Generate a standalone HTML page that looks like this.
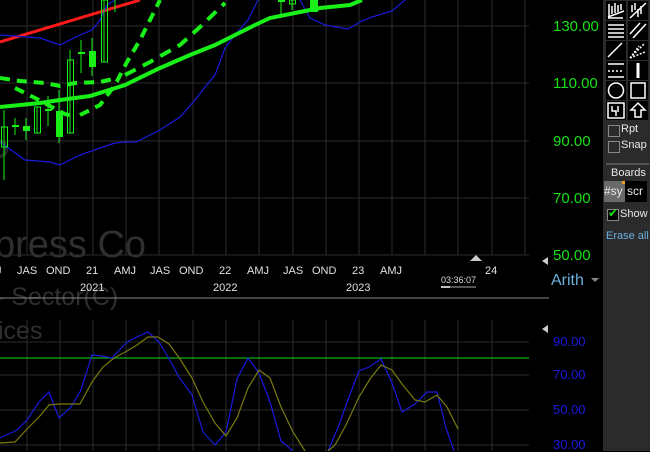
<!DOCTYPE html>
<html><head><style>
body{margin:0;width:650px;height:451px;background:#000;overflow:hidden;position:relative;font-family:"Liberation Sans",sans-serif}
.t{position:absolute;white-space:nowrap}
.wm{color:#2f2f2f;position:absolute;white-space:nowrap}
.ax{color:#e0e0e0;font-size:11px;position:absolute}
.pl{color:#18e018;font-size:15px;position:absolute;left:553px}
.bl{color:#1a1adc;font-size:13px;position:absolute;left:553px}
#side{position:absolute;left:603px;top:0;width:47px;height:451px;background:#2b2b2b}
.sl{color:#e8e8e8;font-size:11px;position:absolute}
.cb{position:absolute;width:10px;height:10px;border:1px solid #888;background:#2b2b2b}
</style></head><body>
<div class="wm" style="left:-6px;top:224px;font-size:38px">press Co</div>
<div class="wm" style="left:-4px;top:283px;font-size:25px">- Sector(C)</div>
<div class="wm" style="left:-2px;top:317px;font-size:25px">ices</div>
<div class="wm" style="left:-20px;top:128px;font-size:46px;color:#262626">P</div>
<svg width="650" height="451" style="position:absolute;left:0;top:0">
<g stroke="#2c2c2c" stroke-width="1">
<path d="M27 0V255M60 0V255M93 0V255M126 0V255M159 0V255M193 0V255M226 0V255M259 0V255M293 0V255M326 0V255M359 0V255M392 0V255M425 0V255M458 0V255M492 0V255M525 0V255"/>
<path d="M0 26H529M0 83H529M0 141H529M0 198H529M0 255H529"/>
<path d="M27 320V451M60 320V451M93 320V451M126 320V451M159 320V451M193 320V451M226 320V451M259 320V451M293 320V451M326 320V451M359 320V451M392 320V451M425 320V451M458 320V451M492 320V451"/>
<path d="M0 342H529M0 375H529M0 410H529M0 445H529"/>
</g>
<path d="M0 298H549" stroke="#888" stroke-width="1"/>
<path d="M0 42L140 0" stroke="#ff1a1a" stroke-width="3"/>
<g stroke="#1a1add" stroke-width="1.2" fill="none">
<path d="M0 35L15 36L40 38L60 45L80 35L92 30L100 20L107 5L115 0"/>
<path d="M300 0L310 18L325 25L348 29L360 22L372 17L392 11L405 0"/>
<path d="M0 142L25 160L50 162L60 165L80 155L100 148L115 143L125 142L136 142L160 130L180 117L195 100L205 87L215 75L225 48L235 35L248 20L258 0"/>
</g>
<g stroke="#18f018" fill="none" stroke-linecap="butt">
<path d="M0 107L40 103L60 100L90 96L125 85L160 68L190 55L215 45L235 35L255 25L270 18L300 12L320 8L350 5L362 0" stroke-width="4"/>
<path d="M0 78L20 81L45 83L60 86L75 83L100 82L113 79" stroke-width="4" stroke-dasharray="10 7"/>
<path d="M15 88L35 98L50 106L65 114L76 117" stroke-width="4" stroke-dasharray="10 7"/>
<path d="M80 115L100 105L115 85L127 62L140 40L160 0" stroke-width="4" stroke-dasharray="10 7"/>
<path d="M125 75L150 62L180 45L200 27L225 3" stroke-width="4" stroke-dasharray="12 8"/>
</g>
<g stroke="#18f018" stroke-width="1" fill="none">
<path d="M4 110V180M15 118V135M26 118V140M37 107V133M48 96V126M59 90V143M70 50V133M81 40V73M92 38V76M104 0V62M115 0V12M281 0V14M292 0V10M314 0V12"/>
<rect x="1.5" y="127" width="6" height="20"/><rect x="34.5" y="107" width="6" height="26"/><rect x="67.5" y="60" width="6" height="73"/><rect x="101.5" y="0" width="6" height="62"/><rect x="289.5" y="0" width="6" height="4"/>
</g>
<g fill="#18f018">
<rect x="12" y="125" width="7" height="2"/><rect x="23" y="126" width="7" height="5"/><rect x="45" y="109" width="7" height="2"/><rect x="56" y="111" width="7" height="26"/><rect x="78" y="52" width="7" height="2"/><rect x="89" y="51" width="7" height="16"/><rect x="278" y="0" width="7" height="2"/><rect x="310" y="0" width="8" height="12"/>
</g>
<path d="M0 358H529" stroke="#10b010" stroke-width="1.2"/>
<path d="M0 438L17 430L27 420L39 402L49 392L59 418L71 407L81 390L92 355L102 356L112 358L127 342L137 337L148 332L159 342L168 357L179 377L192 395L203 432L215 445L226 432L237 379L248 358L259 373L270 402L281 441L293 451M328 451L339 425L349 397L359 371L369 367L381 359L392 383L402 412L415 404L427 392L437 392L446 428L454 451" stroke="#1a1add" stroke-width="1.2" fill="none"/>
<path d="M0 443L15 442L27 429L39 417L49 405L60 404L80 404L92 382L103 367L114 358L127 351L137 345L148 337L158 337L169 344L180 359L192 378L203 402L215 423L226 436L237 418L248 388L259 370L270 378L281 407L293 432L305 451M328 451L335 445L346 425L359 397L370 379L381 365L392 370L402 384L415 400L425 402L437 395L447 407L458 429" stroke="#7a7a10" stroke-width="1.2" fill="none"/>
<path d="M470 261L476 255L482 261Z" fill="#ccc"/>
<path d="M548 257L542 261L548 265Z" fill="#ccc"/>
<path d="M548 325L542 329L548 333Z" fill="#ccc"/>
<path d="M591 278L599 278L595 282Z" fill="#888"/>
<path d="M441 287H476" stroke="#aaa"/><path d="M441 287H450" stroke="#fff" stroke-width="1.5"/>
</svg>
<div class="ax" style="left:-4px;top:265px">J</div>
<div class="ax" style="left:17px;top:265px">JAS</div>
<div class="ax" style="left:46px;top:265px">OND</div>
<div class="ax" style="left:86px;top:265px">21</div>
<div class="ax" style="left:114px;top:265px">AMJ</div>
<div class="ax" style="left:150px;top:265px">JAS</div>
<div class="ax" style="left:179px;top:265px">OND</div>
<div class="ax" style="left:219px;top:265px">22</div>
<div class="ax" style="left:247px;top:265px">AMJ</div>
<div class="ax" style="left:283px;top:265px">JAS</div>
<div class="ax" style="left:312px;top:265px">OND</div>
<div class="ax" style="left:352px;top:265px">23</div>
<div class="ax" style="left:380px;top:265px">AMJ</div>
<div class="ax" style="left:485px;top:265px">24</div>
<div class="ax" style="left:80px;top:282px">2021</div>
<div class="ax" style="left:213px;top:282px">2022</div>
<div class="ax" style="left:346px;top:282px">2023</div>
<div class="t" style="left:441px;top:275px;font-size:9px;color:#ddd">03:36:07</div>
<div class="pl" style="top:18px">130.00</div>
<div class="pl" style="top:75px">110.00</div>
<div class="pl" style="top:133px">90.00</div>
<div class="pl" style="top:190px">70.00</div>
<div class="pl" style="top:247px">50.00</div>
<div class="t" style="left:551px;top:272px;font-size:16px;color:#6ab0de">Arith</div>
<div class="bl" style="top:334px">90.00</div>
<div class="bl" style="top:367px">70.00</div>
<div class="bl" style="top:402px">50.00</div>
<div class="bl" style="top:437px">30.00</div>
<div id="side">
<svg width="47" height="122" style="position:absolute;left:0;top:0">
<g fill="#000"><rect x="3" y="1" width="20" height="19"/><rect x="25" y="1" width="20" height="19"/><rect x="3" y="21" width="20" height="19"/><rect x="25" y="21" width="20" height="19"/><rect x="3" y="41" width="20" height="19"/><rect x="25" y="41" width="20" height="19"/><rect x="3" y="61" width="20" height="19"/><rect x="25" y="61" width="20" height="19"/><rect x="3" y="81" width="20" height="19"/><rect x="25" y="81" width="20" height="19"/><rect x="3" y="101" width="20" height="19"/><rect x="25" y="101" width="20" height="19"/></g>
<g stroke="#fff" stroke-width="1.5" fill="none">
<path d="M5 17L21 11M6 16V4M9 14V6M12 13V3M15 12V5M18 10V4M5 18H20"/>
<path d="M27 18L43 3M29 12V5M32 10V3M35 17V9M38 14V6"/>
<path d="M5 25H21M5 29H21M5 33H21M5 37H21"/>
<path d="M27 34L37 23M30 38L43 24"/>
<path d="M5 57L19 43"/>
<path d="M27 58L41 44M27 58L42 52M27 58L36 46" stroke-dasharray="2 1.5"/>
<path d="M5 64H21M5 77H21"/><path d="M5 71H21" stroke-dasharray="2 2"/>
<path d="M35 63V78" stroke-width="3"/>
<circle cx="13" cy="90.5" r="7.5"/><rect x="28" y="83" width="14" height="15"/>
<rect x="5" y="103" width="16" height="15"/><path d="M9 106V111H13V116M15 106V112"/>
<path d="M35 103L28 110H32V117H38V110H42Z"/>
</g></svg>
<div class="cb" style="left:5px;top:125px"></div><div class="sl" style="left:18px;top:123px">Rpt</div>
<div class="cb" style="left:5px;top:141px"></div><div class="sl" style="left:18px;top:139px">Snap</div>
<div style="position:absolute;left:3px;top:163px;width:43px;height:2px;background:#555"></div>
<div class="sl" style="left:8px;top:167px">Boards</div>
<div style="position:absolute;left:1px;top:181px;width:21px;height:21px;background:#6a6a6a"></div>
<div class="sl" style="left:1px;top:184px;font-size:12px">#sy</div>
<div style="position:absolute;left:22px;top:181px;width:22px;height:21px;background:#000"></div>
<div class="sl" style="left:24px;top:184px;font-size:12px">scr</div>
<div style="position:absolute;left:19px;top:181px;width:3px;height:3px;background:#f0a020"></div>
<div class="cb" style="left:4px;top:209px;background:#000"></div>
<div class="t" style="left:5px;top:206px;color:#18e018;font-size:12px">✔</div>
<div class="sl" style="left:17px;top:208px;font-size:11px">Show</div>
<div class="t" style="left:3px;top:230px;font-size:11px;color:#6ab0de">Erase all</div>
</div>
</body></html>
